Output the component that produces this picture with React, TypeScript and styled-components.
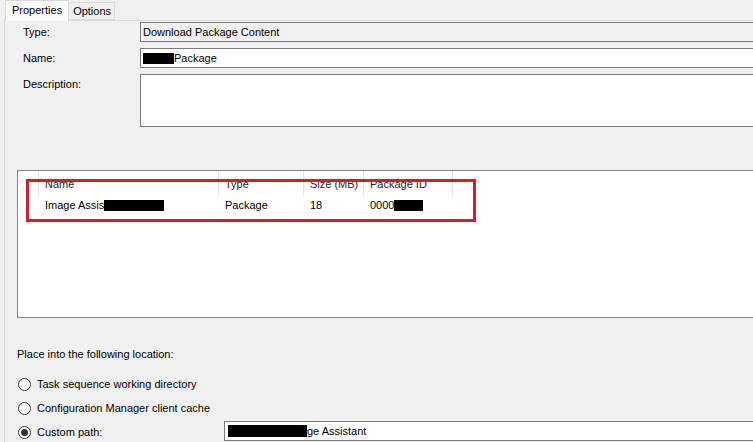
import React from 'react'
import styled, { createGlobalStyle } from 'styled-components'

const GlobalStyle = createGlobalStyle`
  html, body {
    margin: 0;
    padding: 0;
    background: #f0f0f0;
  }
  body {
    font-family: "Liberation Sans", Arial, sans-serif;
    font-size: 11px;
    color: #000;
  }
`

interface Column {
  title: string;
  width: number;
}

const columns: Column[] = [
  { title: 'Name', width: 180 },
  { title: 'Type', width: 85 },
  { title: 'Size (MB)', width: 60 },
  { title: 'Package ID', width: 90 },
]

const radios = [
  { label: 'Task sequence working directory', checked: false },
  { label: 'Configuration Manager client cache', checked: false },
]

const Window = styled.div`
  width: 753px;
  height: 442px;
  overflow: hidden;
  background: #f0f0f0;
`

const TabStrip = styled.div`
  display: flex;
  align-items: flex-end;
  height: 20px;
  padding-left: 5px;
`

const Tab = styled.div<{ $active?: boolean }>`
  box-sizing: border-box;
  height: ${({ $active }) => ($active ? '21px' : '18px')};
  padding: ${({ $active }) => ($active ? '3px 6px 0 6px' : '2px 3px 0 4px')};
  margin-bottom: ${({ $active }) => ($active ? '-1px' : '0')};
  background: ${({ $active }) => ($active ? '#fbfbfb' : '#f0f0f0')};
  border: 1px solid #d9d9d9;
  border-bottom: ${({ $active }) => ($active ? 'none' : '1px solid #d9d9d9')};
  border-left: ${({ $active }) => ($active ? '1px solid #d9d9d9' : 'none')};
  position: relative;
  z-index: ${({ $active }) => ($active ? 1 : 0)};
`

const Panel = styled.div`
  margin-left: 4px;
  width: 800px;
  border-top: 1px solid #d9d9d9;
  border-left: 1px solid #d9d9d9;
  height: 440px;
`

const Fields = styled.div`
  display: grid;
  grid-template-columns: 117px 1fr;
  row-gap: 6px;
  padding: 1px 0 0 18px;
`

const Label = styled.div`
  line-height: 20px;
`

const TextBox = styled.div<{ $readOnly?: boolean; $tall?: boolean }>`
  box-sizing: border-box;
  height: ${({ $tall }) => ($tall ? '53px' : '20px')};
  border: 1px solid #7a7a7a;
  background: ${({ $readOnly }) => ($readOnly ? '#f0f0f0' : '#fff')};
  display: flex;
  align-items: ${({ $tall }) => ($tall ? 'flex-start' : 'center')};
  padding-left: 2px;
`

const Redacted = styled.span<{ $w: number; $h?: number }>`
  display: inline-block;
  width: ${({ $w }) => $w}px;
  height: ${({ $h }) => $h ?? 11}px;
  background: #000;
  vertical-align: middle;
`

const ListView = styled.div`
  position: relative;
  box-sizing: border-box;
  margin: 43px 0 0 12px;
  height: 148px;
  border: 1px solid #828282;
  background: #fff;
`

const Header = styled.div`
  display: flex;
  height: 25px;
  padding-left: 20px;
`

const HeaderCell = styled.div<{ $w: number }>`
  box-sizing: border-box;
  width: ${({ $w }) => $w}px;
  border-left: 1px solid #e5e5e5;
  padding: 7px 0 0 6px;
  color: #1e1e1e;
  &:last-child {
    border-right: 1px solid #e5e5e5;
  }
`

const Row = styled.div`
  display: flex;
  height: 18px;
  align-items: center;
  padding-left: 20px;
`

const Cell = styled.div<{ $w: number }>`
  width: ${({ $w }) => $w}px;
  padding-left: 7px;
  box-sizing: border-box;
  white-space: nowrap;
`

const Highlight = styled.div`
  position: absolute;
  left: 8px;
  top: 8px;
  width: 450px;
  height: 43px;
  box-sizing: border-box;
  border: 3px solid #d21f2f;
  pointer-events: none;
`

const Section = styled.div`
  padding-left: 12px;
`

const Caption = styled.div`
  margin-top: 30px;
  height: 13px;
  line-height: 13px;
`

const Options = styled.div`
  margin-top: 11px;
  display: flex;
  flex-direction: column;
`

const OptionRow = styled.div`
  display: flex;
  align-items: center;
  height: 24px;
`

const Radio = styled.span<{ $checked?: boolean }>`
  box-sizing: border-box;
  width: 13px;
  height: 13px;
  margin: 0 6px 0 1px;
  border-radius: 50%;
  border: 1px solid #333;
  background: #fff;
  display: flex;
  align-items: center;
  justify-content: center;
  &::after {
    content: '';
    display: ${({ $checked }) => ($checked ? 'block' : 'none')};
    width: 7px;
    height: 7px;
    border-radius: 50%;
    background: #333;
  }
`

const OptionLabel = styled.span<{ $w?: number }>`
  width: ${({ $w }) => ($w ? `${$w}px` : 'auto')};
`

const PathBox = styled(TextBox)`
  flex: 1;
  padding-left: 3px;
  margin-top: -2px;
`

const App = () => {
  return (
    <Window>
      <GlobalStyle />
      <TabStrip>
        <Tab $active>Properties</Tab>
        <Tab>Options</Tab>
      </TabStrip>
      <Panel>
        <Fields>
          <Label>Type:</Label>
          <TextBox $readOnly>Download Package Content</TextBox>
          <Label>Name:</Label>
          <TextBox>
            <Redacted $w={31} />
            Package
          </TextBox>
          <Label>Description:</Label>
          <TextBox $tall />
        </Fields>

        <ListView>
          <Header>
            {columns.map((c) => (
              <HeaderCell key={c.title} $w={c.width}>
                {c.title}
              </HeaderCell>
            ))}
          </Header>
          <Row>
            <Cell $w={180}>
              Image Assis<Redacted $w={60} />
            </Cell>
            <Cell $w={85}>Package</Cell>
            <Cell $w={60}>18</Cell>
            <Cell $w={90}>
              0000<Redacted $w={29} />
            </Cell>
          </Row>
          <Highlight />
        </ListView>

        <Section>
          <Caption>Place into the following location:</Caption>
          <Options>
            {radios.map((r) => (
              <OptionRow key={r.label}>
                <Radio $checked={r.checked} />
                <OptionLabel>{r.label}</OptionLabel>
              </OptionRow>
            ))}
            <OptionRow>
              <Radio $checked />
              <OptionLabel $w={187}>Custom path:</OptionLabel>
              <PathBox>
                <Redacted $w={79} $h={12} />
                ge Assistant
              </PathBox>
            </OptionRow>
          </Options>
        </Section>
      </Panel>
    </Window>
  )
}

export default App
